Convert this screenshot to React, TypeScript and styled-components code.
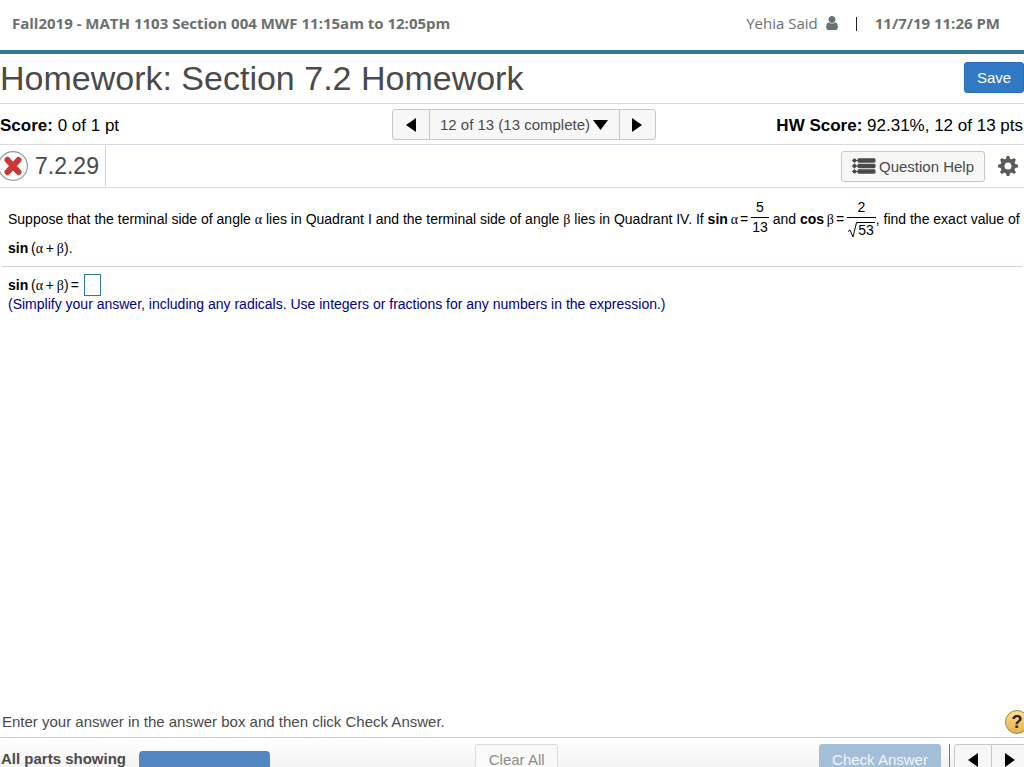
import React from "react";
import styled, { createGlobalStyle } from "styled-components";

const GlobalStyle = createGlobalStyle`
  *, *::before, *::after { box-sizing: border-box; }
  body {
    margin: 0;
    background: #fff;
    color: #000;
    font-family: "Liberation Sans", Arial, Helvetica, sans-serif;
  }
  button, input { font-family: inherit; margin: 0; padding: 0; }
  h1, h2, p { margin: 0; font-weight: normal; }
`;

const Page = styled.div`
  display: flex;
  flex-direction: column;
  height: 100vh;
  overflow: hidden;
  white-space: nowrap;
`;

const CourseBar = styled.header`
  display: flex;
  align-items: center;
  justify-content: space-between;
  height: 54px;
  padding: 0 24px 4px 12px;
  border-bottom: 4px solid #31789a;
  color: #6a7070;
  font-family: "Open Sans", sans-serif;
  font-size: 15px;
`;

const CourseInfo = styled.div`
  display: flex;
  align-items: center;
`;

const UserName = styled.span`
  margin-right: 8px;
`;

const Divider = styled.span`
  width: 1px;
  height: 14px;
  margin: 2px 18px 0;
  background: #222;
`;

const TitleBar = styled.div`
  display: flex;
  align-items: center;
  justify-content: space-between;
  height: 50px;
  padding-bottom: 2px;
  border-bottom: 1px solid #d8dbe3;
`;

const Title = styled.h1`
  color: #4a4a4a;
  font-size: 34px;
  line-height: 40px;
`;

const SaveButton = styled.button`
  width: 60px;
  height: 31px;
  border: 1px solid #2a6db5;
  border-radius: 3px;
  background: #3279c5;
  color: #fff;
  font-size: 15px;
`;

const ScoreBar = styled.div`
  display: grid;
  grid-template-columns: 17fr auto 16fr;
  align-items: center;
  height: 41px;
  padding-top: 1px;
  border-bottom: 1px solid #d8dbe3;
  font-size: 17px;
`;

const Score = styled.p<{ $end?: boolean }>`
  text-align: ${(p) => (p.$end ? "right" : "left")};
  padding-top: 2px;
  padding-right: ${(p) => (p.$end ? "1px" : "0")};
`;

const Pager = styled.nav`
  display: flex;
  height: 31px;
  border: 1px solid #c8c8c8;
  border-radius: 3px;
  background: #f7f7f7;
`;

const PagerButton = styled.button<{ $wide?: boolean }>`
  display: flex;
  align-items: center;
  justify-content: center;
  gap: 3px;
  width: ${(p) => (p.$wide ? "190px" : "36px")};
  border: 0;
  background: transparent;
  color: #4a4a4a;
  font-size: 15px;

  & + & { border-left: 1px solid #c8c8c8; }
`;

const ExerciseBar = styled.div`
  display: flex;
  align-items: center;
  justify-content: space-between;
  height: 43px;
  padding-right: 6px;
  border-bottom: 1px solid #d8dbe3;
`;

const Exercise = styled.div`
  display: flex;
  align-items: center;
  gap: 6px;
  height: 40px;
  padding-right: 6px;
  border-right: 1px solid #d0d0dc;
`;

const ExerciseNumber = styled.h2`
  color: #4a4a4a;
  font-size: 23px;
  line-height: 28px;
`;

const Tools = styled.div`
  display: flex;
  align-items: center;
  gap: 13px;
`;

const HelpButton = styled.button`
  display: flex;
  align-items: center;
  justify-content: center;
  gap: 3px;
  width: 144px;
  height: 31px;
  border: 1px solid #c8c8c8;
  border-radius: 3px;
  background: #f7f7f7;
  color: #4a4a4a;
  font-size: 15px;
`;

const IconButton = styled.button`
  display: flex;
  border: 0;
  background: transparent;
`;

const Workspace = styled.main`
  flex: 1;
  padding: 10px 2px 0;
  font-size: 14px;
`;

const Prompt = styled.p`
  padding: 0 0 7px 6px;
  line-height: 20px;
  white-space: normal;
`;

const Answer = styled.div`
  padding: 6px 6px 0;
  border-top: 1px solid #ccccdd;
`;

const AnswerRow = styled.label`
  display: flex;
  align-items: center;
  gap: 5px;
  height: 24px;
`;

const AnswerInput = styled.input`
  width: 17px;
  height: 22px;
  border: 1px solid #31789a;
  border-radius: 0;
  background: #fff;
`;

const Hint = styled.p`
  color: #000080;
  line-height: 15px;
`;

const Expression = styled.span`
  white-space: nowrap;
`;

const Greek = styled.span`
  font-family: "Liberation Serif", "Times New Roman", serif;
  font-size: 14px;
`;

const Equals = styled.span`
  margin-left: 2px;
`;

const Fraction = styled.span`
  display: inline-flex;
  flex-direction: column;
  align-items: center;
  margin: 0 0 0 3px;
  vertical-align: 12px;
  line-height: 19px;
`;

const Numerator = styled.span`
  align-self: stretch;
  border-bottom: 1px solid #000;
  text-align: center;
`;

const Denominator = styled.span`
  display: flex;
  align-items: center;
  padding: 0 1px;
`;

const Radical = styled.span`
  display: flex;
  align-items: flex-start;
  padding-top: 4px;
`;

const Radicand = styled.span`
  padding: 0 1px;
  border-top: 1px solid #000;
  line-height: 15px;
`;

const Instruction = styled.div`
  display: flex;
  align-items: center;
  justify-content: space-between;
  height: 31px;
  padding-left: 2px;
  color: #4a4a4a;
  font-size: 15px;
`;

const HelpBadge = styled.button`
  flex: none;
  width: 24px;
  height: 24px;
  margin-right: -5px;
  border: 1px solid #9a8250;
  border-radius: 50%;
  background: linear-gradient(#fde08c, #e8b04a);
  color: #222;
  font-size: 18px;
  font-weight: bold;
  line-height: 20px;
`;

const Footer = styled.footer`
  display: grid;
  grid-template-columns: 51fr auto 50fr;
  align-items: start;
  height: 30px;
  padding-top: 6px;
  border-top: 1px solid #ccccdd;
  background: linear-gradient(#fff, #f3f3f3);
  overflow: hidden;
`;

const Progress = styled.div`
  display: flex;
  align-items: flex-start;
  gap: 13px;
  padding: 6px 0 0 1px;
  color: #4a4a4a;
  font-size: 15px;
  font-weight: bold;
  line-height: 18px;
`;

const ProgressBar = styled.div`
  width: 131px;
  height: 24px;
  margin-top: 1px;
  border-radius: 4px;
  background: #5087c1;
`;

const FooterButton = styled.button<{ $primary?: boolean }>`
  width: ${(p) => (p.$primary ? "122px" : "83px")};
  height: 31px;
  border: 1px solid ${(p) => (p.$primary ? "#a3bed8" : "#dcdcdc")};
  border-radius: 3px;
  background: ${(p) => (p.$primary ? "#a3bed8" : "#f9f9f9")};
  color: ${(p) => (p.$primary ? "#f4f6f8" : "#8c8c8c")};
  font-size: 15px;
`;

const FooterActions = styled.div`
  display: flex;
  justify-content: flex-end;
  margin-right: -4px;
`;

const FooterDivider = styled.span`
  width: 1px;
  margin: 0 4px 0 8px;
  background: #777;
`;

const UserIcon = () => (
  <svg width="12" height="14" viewBox="0 0 1280 1536" aria-hidden="true">
    <path
      transform="translate(0 1408) scale(1 -1)"
      fill="#6a7070"
      d="M1280 137q0-109-62.500-187t-150.500-78h-854q-88 0-150.500 78t-62.500 187q0 85 8.500 160.500t31.500 152t58.500 131t94 89t134.500 34.500q131-128 313-128t313 128q76 0 134.500-34.500t94-89t58.500-131t31.500-152t8.500-160.500zM1024 1024q0-159-112.500-271.500t-271.500-112.500t-271.500 112.500t-112.500 271.500t112.500 271.500t271.500 112.500t271.500-112.500t112.500-271.500z"
    />
  </svg>
);

const Arrow = ({ direction }: { direction: "left" | "right" }) => (
  <svg width="10" height="14" viewBox="0 0 10 14" aria-hidden="true">
    <path d={direction === "left" ? "M10 0v14L0 7z" : "M0 0v14L10 7z"} />
  </svg>
);

const WrongIcon = () => (
  <svg width="29" height="30" viewBox="0 0 29 30" role="img" aria-label="Incorrect">
    <circle cx="13" cy="15" r="14.400" fill="#fff" stroke="#999" strokeWidth="1.200" />
    <path d="M7.500 9l11 12M18.500 9l-11 12" stroke="#cf3735" strokeWidth="6" strokeLinecap="round" />
  </svg>
);

const ListIcon = () => (
  <svg width="24" height="16" viewBox="0 0 24 16" fill="#4a4a4a" aria-hidden="true">
    <rect x="2" y="2" width="1" height="12" opacity="0.500" />
    {[2.5, 8, 13.5].map((y) => (
      <g key={y}>
        <circle cx="2.500" cy={y} r="2" />
        <rect x="5.500" y={y - 2.2} width="18" height="4.400" rx="1.400" />
        <rect x="0" y={y - 0.5} width="7" height="1" />
      </g>
    ))}
  </svg>
);

const GearIcon = () => (
  <svg width="20" height="20" viewBox="-10 -10 20 20" aria-hidden="true">
    <circle r="5.500" fill="none" stroke="#5c5c5c" strokeWidth="4" />
    {[0, 45, 90, 135, 180, 225, 270, 315].map((angle) => (
      <path key={angle} transform={`rotate(${angle})`} fill="#5c5c5c" d="M-2.200-6.500l.9-3.500h2.600l.9 3.500z" />
    ))}
  </svg>
);

const AngleSum = () => (
  <>
    <b>sin</b>&thinsp;(<Greek>α</Greek>&thinsp;+&thinsp;<Greek>β</Greek>)
  </>
);

export default function App() {
  return (
    <>
      <GlobalStyle />
      <Page>
        <CourseBar>
          <b>Fall2019 - MATH 1103 Section 004 MWF 11:15am to 12:05pm</b>
          <CourseInfo>
            <UserName>Yehia Said</UserName>
            <UserIcon />
            <Divider />
            <b>11/7/19 11:26 PM</b>
          </CourseInfo>
        </CourseBar>
        <TitleBar>
          <Title>Homework: Section 7.2 Homework</Title>
          <SaveButton>Save</SaveButton>
        </TitleBar>
        <ScoreBar>
          <Score>
            <b>Score:</b> 0 of 1 pt
          </Score>
          <Pager aria-label="Questions">
            <PagerButton aria-label="Previous question">
              <Arrow direction="left" />
            </PagerButton>
            <PagerButton $wide>
              12 of 13 (13 complete)
              <svg width="15" height="10" viewBox="0 0 15 10" aria-hidden="true">
                <path d="M0 0h15L7.500 10z" fill="#000" />
              </svg>
            </PagerButton>
            <PagerButton aria-label="Next question">
              <Arrow direction="right" />
            </PagerButton>
          </Pager>
          <Score $end>
            <b>HW Score:</b> 92.31%, 12 of 13 pts
          </Score>
        </ScoreBar>
        <ExerciseBar>
          <Exercise>
            <WrongIcon />
            <ExerciseNumber>7.2.29</ExerciseNumber>
          </Exercise>
          <Tools>
            <HelpButton>
              <ListIcon />
              Question Help
            </HelpButton>
            <IconButton aria-label="Settings">
              <GearIcon />
            </IconButton>
          </Tools>
        </ExerciseBar>
        <Workspace>
          <Prompt>
            Suppose that the terminal side of angle <Greek>α</Greek> lies in Quadrant I and the terminal side of angle{" "}
            <Greek>β</Greek> lies in Quadrant IV. If <b>sin</b>&thinsp;<Greek>α</Greek>
            <Equals>=</Equals>
            <Fraction>
              <Numerator>5</Numerator>
              <Denominator>13</Denominator>
            </Fraction>{" "}
            and <b>cos</b>&thinsp;<Greek>β</Greek>
            <Equals>=</Equals>
            <Fraction>
              <Numerator>2</Numerator>
              <Denominator>
                <Radical>
                  <svg width="9" height="16" viewBox="0 0 9 16" aria-hidden="true">
                    <path d="M0 9.500l2-1.500l3 7L8.500.5H9" fill="none" stroke="#000" />
                  </svg>
                  <Radicand>53</Radicand>
                </Radical>
              </Denominator>
            </Fraction>
            , find the exact value of{" "}
            <Expression>
              <AngleSum />.
            </Expression>
          </Prompt>
          <Answer>
            <AnswerRow>
              <span>
                <AngleSum />
                <Equals>=</Equals>
              </span>
              <AnswerInput type="text" />
            </AnswerRow>
            <Hint>
              (Simplify your answer, including any radicals. Use integers or fractions for any numbers in the expression.)
            </Hint>
          </Answer>
        </Workspace>
        <Instruction>
          <p>Enter your answer in the answer box and then click Check Answer.</p>
          <HelpBadge aria-label="Help">?</HelpBadge>
        </Instruction>
        <Footer>
          <Progress>
            All parts showing
            <ProgressBar />
          </Progress>
          <FooterButton disabled>Clear All</FooterButton>
          <FooterActions>
            <FooterButton $primary disabled>
              Check Answer
            </FooterButton>
            <FooterDivider />
            <Pager aria-label="Parts">
              <PagerButton aria-label="Previous part">
                <Arrow direction="left" />
              </PagerButton>
              <PagerButton aria-label="Next part">
                <Arrow direction="right" />
              </PagerButton>
            </Pager>
          </FooterActions>
        </Footer>
      </Page>
    </>
  );
}
